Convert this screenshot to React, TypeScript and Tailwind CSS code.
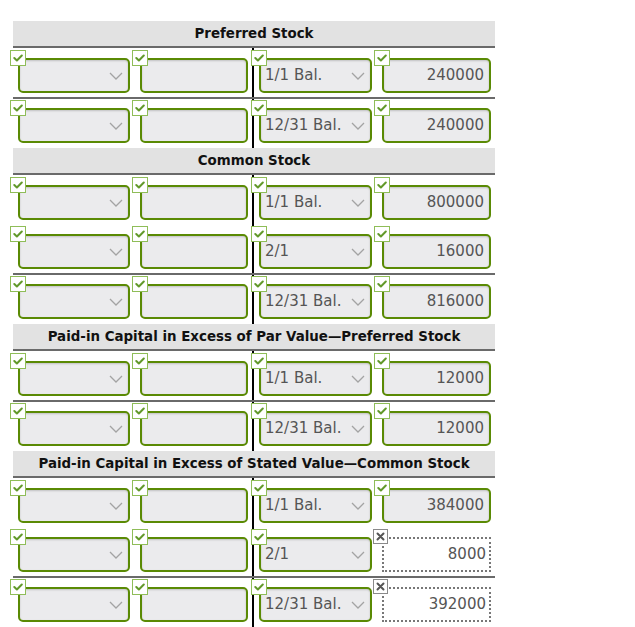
type Row = { label: string; amount: string; sep?: boolean; wrong?: boolean };
type Section = { title: string; rows: Row[] };

const sections: Section[] = [
  {
    title: "Preferred Stock",
    rows: [
      { label: "1/1 Bal.", amount: "240000" },
      { label: "12/31 Bal.", amount: "240000", sep: true },
    ],
  },
  {
    title: "Common Stock",
    rows: [
      { label: "1/1 Bal.", amount: "800000" },
      { label: "2/1", amount: "16000" },
      { label: "12/31 Bal.", amount: "816000", sep: true },
    ],
  },
  {
    title: "Paid-in Capital in Excess of Par Value—Preferred Stock",
    rows: [
      { label: "1/1 Bal.", amount: "12000" },
      { label: "12/31 Bal.", amount: "12000", sep: true },
    ],
  },
  {
    title: "Paid-in Capital in Excess of Stated Value—Common Stock",
    rows: [
      { label: "1/1 Bal.", amount: "384000" },
      { label: "2/1", amount: "8000", wrong: true },
      { label: "12/31 Bal.", amount: "392000", sep: true, wrong: true },
    ],
  },
];

const CheckMark = () => (
  <div className="absolute -left-[10px] -top-[10px] z-10 flex h-[16px] w-[16px] items-center justify-center border-[1.5px] border-[#8fbd58] bg-white">
    <svg width="10" height="8" viewBox="0 0 10 8">
      <path d="M1.3 4 L3.9 6.5 L8.8 1.5" fill="none" stroke="#62992a" strokeWidth="2" strokeLinecap="round" strokeLinejoin="round" />
    </svg>
  </div>
);

const CrossMark = () => (
  <div className="absolute -left-[11px] -top-[10px] z-10 flex h-[15px] w-[15px] items-center justify-center border border-[#8a8a8a] bg-white">
    <svg width="9" height="9" viewBox="0 0 9 9">
      <path d="M1.5 1.5 L7.5 7.5 M7.5 1.5 L1.5 7.5" stroke="#555" strokeWidth="2" strokeLinecap="round" />
    </svg>
  </div>
);

const Chevron = () => (
  <svg width="14" height="8" viewBox="0 0 14 8" className="mr-[5px] shrink-0">
    <path d="M1 1 L7 7 L13 1" fill="none" stroke="#a3a3a3" strokeWidth="1.3" />
  </svg>
);

const boxCls =
  "relative flex h-[35px] items-center rounded-[5px] border-[2.5px] border-[#5a8a04] bg-[#ebebed] shadow-[inset_0_1px_2px_rgba(0,0,0,0.18)]";

const SelectBox = ({ width, label }: { width: string; label?: string }) => (
  <div className={`${boxCls} ${width}`}>
    <CheckMark />
    <span className="flex-1 pl-[4px] text-[15px] text-[#555]">{label}</span>
    <Chevron />
  </div>
);

const InputBox = ({ width, value, wrong }: { width: string; value?: string; wrong?: boolean }) =>
  wrong ? (
    <div className={`relative flex h-[35px] items-center justify-end border-2 border-dotted border-[#777] bg-white pr-[3px] text-[15px] text-[#555] ${width}`}>
      <CrossMark />
      {value}
    </div>
  ) : (
    <div className={`${boxCls} justify-end pr-[5px] text-[15px] text-[#555] ${width}`}>
      <CheckMark />
      {value}
    </div>
  );

const LedgerRow = ({ row }: { row: Row }) => (
  <div className={`flex ${row.sep ? "h-[51px] border-t-2 border-[#6a6a6a]" : "h-[49px]"}`}>
    <div className={`flex w-[239px] gap-[10px] pl-[5px] ${row.sep ? "pt-[9px]" : "pt-[10px]"}`}>
      <SelectBox width="w-[112px]" />
      <InputBox width="w-[108px]" />
    </div>
    <div className={`flex flex-1 gap-[10px] border-l-2 border-black pl-[5px] ${row.sep ? "pt-[9px]" : "pt-[10px]"}`}>
      <SelectBox width="w-[113px]" label={row.label} />
      <InputBox width="w-[109px]" value={row.amount} wrong={row.wrong} />
    </div>
  </div>
);

export default function App() {
  return (
    <div className="min-h-[627px] bg-white pl-[13px] pt-[21px] font-['DejaVu_Sans',Verdana,sans-serif]">
      <div className="w-[482px]">
        {sections.map((s) => (
          <div key={s.title}>
            <div className="flex h-[27px] items-center justify-center border-b-2 border-[#6a6a6a] bg-[#e2e2e2] pt-[2px] text-[13.4px] font-bold text-[#111]">
              {s.title}
            </div>
            {s.rows.map((r, i) => (
              <LedgerRow key={i} row={r} />
            ))}
          </div>
        ))}
      </div>
    </div>
  );
}
